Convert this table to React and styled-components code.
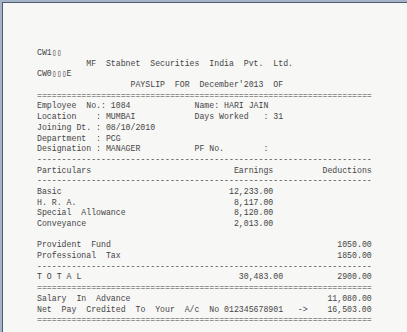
import React from 'react';
import styled, { createGlobalStyle } from 'styled-components';

const Global = createGlobalStyle`
  html, body { margin: 0; padding: 0; background: #f7f7f5; }
  body { width: 407px; height: 332px; overflow: hidden; }
`;

const Frame = styled.div`
  box-sizing: border-box;
  width: 407px;
  height: 332px;
  background: #f7f7f5;
  border-top: 2px solid #a7b4c7;
  border-left: 2px solid #a7b4c7;
  box-shadow: inset 1px 1px 0 #4d5c73;
  padding: 46px 0 0 35px;
  font-family: "Liberation Mono", "Courier New", monospace;
  font-size: 8.21px;
  line-height: 10.7px;
  color: #454545;
`;

const Sheet = styled.div`
  width: 68ch;
  display: flex;
  flex-direction: column;
`;

const Line = styled.div`
  height: 10.7px;
  white-space: pre;
  padding-left: ${(p) => p.$indent || 0}ch;
`;

const Rule = styled.div`
  height: 10.7px;
  white-space: pre;
  overflow: hidden;
`;

const InfoRow = styled.div`
  height: 10.7px;
  display: grid;
  grid-template-columns: 12ch 2ch 18ch 14ch 1fr;
  white-space: pre;
`;

const Wide = styled.span`
  grid-column: ${(p) => p.$span};
`;

const AmountRow = styled.div`
  height: 10.7px;
  display: grid;
  grid-template-columns: 1fr 12ch 20ch;
  white-space: pre;
`;

const Amount = styled.span`
  text-align: right;
  margin-right: ${(p) => p.$shift || 0}ch;
`;

const NetRow = styled.div`
  height: 10.7px;
  display: grid;
  grid-template-columns: 38ch 12ch 5ch 13ch;
  white-space: pre;
`;

const info = [
  { key: 'emp', left: 'Employee  No.: 1084', right: 'Name: HARI JAIN' },
  { key: 'loc', label: 'Location', value: 'MUMBAI', rlabel: 'Days Worked', rvalue: ': 31' },
  { key: 'join', label: 'Joining Dt.', value: '08/10/2010' },
  { key: 'dept', label: 'Department', value: 'PCG' },
  { key: 'desig', label: 'Designation', value: 'MANAGER', rlabel: 'PF No.', rvalue: ':' },
];

const earnings = [
  ['Basic', '12,233.00'],
  ['H. R. A.', '8,117.00'],
  ['Special  Allowance', '8,120.00'],
  ['Conveyance', '2,013.00'],
];

const deductions = [
  ['Provident  Fund', '1050.00'],
  ['Professional  Tax', '1850.00'],
];

const eq = '='.repeat(68);
const dash = '-'.repeat(68);

export default function App() {
  return (
    <>
      <Global />
      <Frame>
        <Sheet>
          <Line>CW1▯▯</Line>
          <Line $indent={10}>MF  Stabnet  Securities  India  Pvt.  Ltd.</Line>
          <Line>CW0▯▯▯E</Line>
          <Line $indent={19}>PAYSLIP  FOR  December'2013  OF</Line>
          <Rule>{eq}</Rule>
          {info.map((r) => (
            <InfoRow key={r.key}>
              {r.left ? (
                <Wide $span="1 / 4">{r.left}</Wide>
              ) : (
                <>
                  <span>{r.label}</span>
                  <span>:</span>
                  <span>{r.value}</span>
                </>
              )}
              {r.right ? (
                <Wide $span="4 / 6">{r.right}</Wide>
              ) : (
                <>
                  <span>{r.rlabel || ''}</span>
                  <span>{r.rvalue || ''}</span>
                </>
              )}
            </InfoRow>
          ))}
          <Rule>{dash}</Rule>
          <AmountRow>
            <span>Particulars</span>
            <Amount>Earnings</Amount>
            <Amount>Deductions</Amount>
          </AmountRow>
          <Rule>{dash}</Rule>
          {earnings.map(([l, v]) => (
            <AmountRow key={l}>
              <span>{l}</span>
              <Amount>{v}</Amount>
              <Amount />
            </AmountRow>
          ))}
          <Line> </Line>
          {deductions.map(([l, v]) => (
            <AmountRow key={l}>
              <span>{l}</span>
              <Amount />
              <Amount>{v}</Amount>
            </AmountRow>
          ))}
          <Rule>{dash}</Rule>
          <AmountRow>
            <span>T O T A L</span>
            <Amount $shift={-2}>30,483.00</Amount>
            <Amount>2900.00</Amount>
          </AmountRow>
          <Rule>{eq}</Rule>
          <AmountRow>
            <span>Salary  In  Advance</span>
            <Amount />
            <Amount>11,080.00</Amount>
          </AmountRow>
          <NetRow>
            <span>Net  Pay  Credited  To  Your  A/c  No</span>
            <span>012345678901</span>
            <Amount>-&gt;</Amount>
            <Amount>16,503.00</Amount>
          </NetRow>
          <Rule>{eq}</Rule>
        </Sheet>
      </Frame>
    </>
  );
}
